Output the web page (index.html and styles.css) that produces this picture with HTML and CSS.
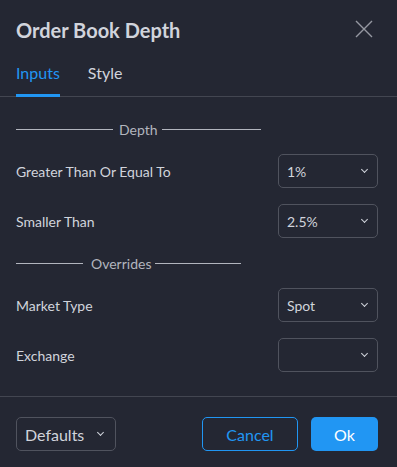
FILE: index.html
```html
<!DOCTYPE html>
<html lang="en">
<head>
    <meta charset="UTF-8">
    <meta name="viewport" content="width=device-width, initial-scale=1.0">
    <title>Order Book Depth</title>
    <link rel="stylesheet" href="styles.css">
</head>
<body>
    <div class="dialog">
        <div class="header">
            <h1>Order Book Depth</h1>
            <button class="close-button" aria-label="Close">
                <svg width="18" height="18" viewBox="0 0 18 18">
                    <path d="M1 1 L17 17 M17 1 L1 17" stroke="#9598a1" stroke-width="1.4" fill="none"/>
                </svg>
            </button>
        </div>

        <div class="tabs">
            <div class="tab active">Inputs</div>
            <div class="tab">Style</div>
        </div>

        <div class="content">
            <div class="section-title">
                <span class="line line-depth-left"></span>
                <span class="section-text">Depth</span>
                <span class="line line-depth-right"></span>
            </div>
            <div class="row">
                <span class="label">Greater Than Or Equal To</span>
                <div class="select"><span>1%</span><span class="chevron"></span></div>
            </div>
            <div class="row">
                <span class="label">Smaller Than</span>
                <div class="select"><span>2.5%</span><span class="chevron"></span></div>
            </div>

            <div class="section-title">
                <span class="line line-over-left"></span>
                <span class="section-text">Overrides</span>
                <span class="line line-over-right"></span>
            </div>
            <div class="row">
                <span class="label">Market Type</span>
                <div class="select"><span>Spot</span><span class="chevron"></span></div>
            </div>
            <div class="row">
                <span class="label">Exchange</span>
                <div class="select"><span></span><span class="chevron"></span></div>
            </div>
        </div>

        <div class="footer">
            <div class="defaults-button">Defaults <span class="chevron"></span></div>
            <div class="footer-actions">
                <button class="cancel-button">Cancel</button>
                <button class="ok-button">Ok</button>
            </div>
        </div>
    </div>
</body>
</html>
```

FILE: styles.css
```css
body {
    font-family: Lato, 'Liberation Sans', Arial, sans-serif;
    margin: 0;
    padding: 0;
    background-color: #242733;
    color: #d1d4dc;
}

.dialog {
    width: 397px;
    height: 467px;
}

.header {
    display: flex;
    justify-content: space-between;
    align-items: center;
    padding: 16px 16px 0 16px;
    height: 28px;
}

.header h1 {
    margin: 0;
    font-size: 20px;
    font-weight: 700;
    color: #d1d4dc;
    line-height: 28px;
}

.close-button {
    background: none;
    border: none;
    padding: 0;
    margin-right: 8px;
    margin-top: -2px;
    width: 18px;
    height: 18px;
    cursor: pointer;
}

.tabs {
    display: flex;
    gap: 28px;
    padding: 0 16px;
    margin-top: 12px;
    border-bottom: 1px solid #434651;
    height: 40px;
}

.tab {
    font-size: 16px;
    line-height: 22px;
    padding-top: 6px;
    color: #d1d4dc;
    margin-bottom: -1px;
}

.tab.active {
    color: #2196f3;
    border-bottom: 3px solid #2196f3;
}

.content {
    padding: 15px 19px 16px 16px;
    border-bottom: 1px solid #434651;
}

.section-title {
    display: flex;
    align-items: center;
    height: 34px;
    font-size: 14px;
    color: #b2b5be;
}

.section-text {
    margin: 0 4px;
}

.line {
    height: 1px;
    background-color: #b2b5be;
}

.line-depth-left { width: 97px; margin-right: 2px; }
.line-depth-right { width: 99px; }
.line-over-left { width: 67px; margin-right: 4px; }
.line-over-right { width: 86px; }

.row {
    display: flex;
    justify-content: space-between;
    align-items: center;
    height: 50px;
    font-size: 14px;
}

.select {
    box-sizing: border-box;
    width: 100px;
    height: 34px;
    border: 1px solid #50535e;
    border-radius: 5px;
    display: flex;
    align-items: center;
    justify-content: space-between;
    padding: 0 10px 0 8px;
    font-size: 14px;
    color: #d1d4dc;
}

.chevron {
    width: 4px;
    height: 4px;
    border-right: 1.5px solid #d1d4dc;
    border-bottom: 1.5px solid #d1d4dc;
    transform: rotate(45deg);
    margin-top: -4px;
}

.footer {
    display: flex;
    justify-content: space-between;
    padding: 20px 19px 0 16px;
}

.defaults-button {
    box-sizing: border-box;
    width: 100px;
    height: 34px;
    border: 1px solid #50535e;
    border-radius: 5px;
    display: flex;
    align-items: center;
    justify-content: space-between;
    padding: 0 12px 0 8px;
    font-size: 16px;
}

.footer-actions {
    display: flex;
    gap: 13px;
}

.cancel-button,
.ok-button {
    box-sizing: border-box;
    height: 34px;
    border-radius: 5px;
    font-family: inherit;
    font-size: 16px;
    cursor: pointer;
}

.cancel-button {
    width: 96px;
    background: none;
    border: 1px solid #2196f3;
    color: #2196f3;
}

.ok-button {
    width: 67px;
    background-color: #2196f3;
    border: none;
    color: #fff;
}
```
